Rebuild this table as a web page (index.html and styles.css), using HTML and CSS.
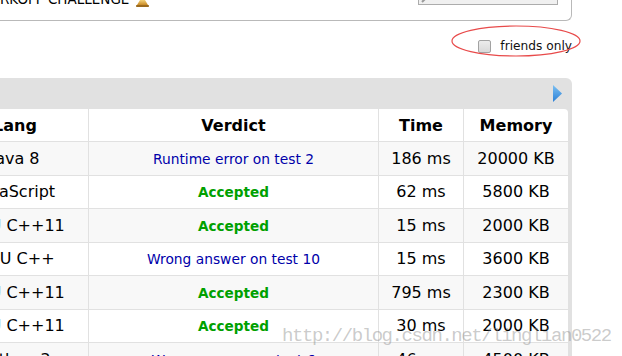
FILE: index.html
```html
<!DOCTYPE html>
<html>
<head>
<meta charset="utf-8">
<link rel="stylesheet" href="styles.css">
</head>
<body>
<div class="topbox">
  <div class="title">WORKOFF CHALLENGE<svg class="trophy" width="15" height="16" viewBox="0 0 15 16"><defs><linearGradient id="tg" x1="0" y1="0" x2="0" y2="1"><stop offset="0" stop-color="#f3d27a"/><stop offset="1" stop-color="#c98a26"/></linearGradient></defs><path d="M3 0h9v4c0 3-2 5-4.5 5S3 7 3 4z" fill="#e6ae3c"/><polygon points="5,9 10,9 13,14 2,14" fill="url(#tg)"/><rect x="1" y="14" width="13" height="2" rx="0.8" fill="#9c6a1c"/></svg></div>
  <div class="search"><svg width="8" height="8" viewBox="0 0 8 8"><path d="M1 7L6 2" stroke="#9a9a9a" stroke-width="2"/></svg></div>
</div>
<div class="filter">
  <label class="friends"><input type="checkbox" class="cb"><span>friends only</span></label>
  <svg class="mark" width="130" height="32" viewBox="0 0 130 32"><ellipse cx="65" cy="16" rx="64" ry="15" fill="none" stroke="#e84a4a" stroke-width="1.2"/></svg>
</div>
<div class="frame">
  <div class="frame-head"><svg width="9" height="17" viewBox="0 0 9 17"><defs><linearGradient id="ag" x1="0" y1="0" x2="0" y2="1"><stop offset="0" stop-color="#7cc0f2"/><stop offset="1" stop-color="#2a7fd6"/></linearGradient></defs><polygon points="0,0 9,8.5 0,17" fill="url(#ag)"/></svg></div>
  <table class="status">
    <colgroup><col class="c-lang"><col class="c-verdict"><col class="c-time"><col class="c-mem"></colgroup>
    <thead>
      <tr><th>Lang</th><th>Verdict</th><th>Time</th><th>Memory</th></tr>
    </thead>
    <tbody>
      <tr><td>Java 8</td><td><span class="rej">Runtime error on test 2</span></td><td>186 ms</td><td>20000 KB</td></tr>
      <tr><td>JavaScript</td><td><span class="ok">Accepted</span></td><td>62 ms</td><td>5800 KB</td></tr>
      <tr><td>GNU C++11</td><td><span class="ok">Accepted</span></td><td>15 ms</td><td>2000 KB</td></tr>
      <tr><td>GNU C++</td><td><span class="rej">Wrong answer on test 10</span></td><td>15 ms</td><td>3600 KB</td></tr>
      <tr><td>GNU C++11</td><td><span class="ok">Accepted</span></td><td>795 ms</td><td>2300 KB</td></tr>
      <tr><td>GNU C++11</td><td><span class="ok">Accepted</span></td><td>30 ms</td><td>2000 KB</td></tr>
      <tr><td>Python 3</td><td><span class="rej">Wrong answer on test 6</span></td><td>46 ms</td><td>4500 KB</td></tr>
    </tbody>
  </table>
</div>
<div class="wm">http://blog.csdn.net/linglian0522</div>
</body>
</html>
```
FILE: styles.css
```css
body {
  margin: 0;
  width: 622px;
  height: 356px;
  overflow: hidden;
  position: relative;
  background: #fff;
  color: #000;
  font-family: "DejaVu Sans", Verdana, sans-serif;
}

.topbox {
  box-sizing: border-box;
  width: 602px;
  height: 42px;
  margin: -21px 0 0 -30px;
  border-right: 1px solid #b9b9b9;
  border-bottom: 1px solid #b9b9b9;
  border-radius: 0 0 6px 0;
  display: flex;
  justify-content: space-between;
  align-items: flex-start;
  padding: 0 13px 0 6px;
}

.title {
  margin-top: 12px;
  font-size: 13.5px;
  line-height: 16px;
  white-space: nowrap;
}

.trophy {
  margin-left: 6px;
  vertical-align: -3px;
}

.search {
  margin-top: 2px;
  width: 140px;
  height: 24px;
  box-sizing: border-box;
  border: 1px solid #acacac;
  background: #f0f0f0;
  display: flex;
  align-items: flex-end;
  padding: 0 0 1px 2px;
}

.filter {
  position: relative;
  display: flex;
  justify-content: flex-end;
  padding-right: 50px;
  margin-top: 19px;
  height: 13px;
}

.friends {
  display: flex;
  align-items: center;
  gap: 9px;
  font-size: 12.2px;
  line-height: 13px;
  color: #111;
}

.cb {
  appearance: none;
  -webkit-appearance: none;
  margin: 0;
  width: 13px;
  height: 13px;
  box-sizing: border-box;
  border: 1px solid #a2a2a2;
  border-radius: 2px;
  background: linear-gradient(#ececec, #d9d9d9);
}

.mark {
  position: absolute;
  right: 41px;
  top: -15px;
}

.frame {
  margin: 25px 0 0 -58px;
  width: 630px;
  box-sizing: border-box;
  background: #e1e1e1;
  border-radius: 0 6px 0 0;
  padding: 0 4px 0 0;
}

.frame-head {
  height: 31px;
  box-sizing: border-box;
  display: flex;
  justify-content: flex-end;
  padding: 7px 6px 0 0;
}

.status {
  border-collapse: separate;
  border-spacing: 0;
  table-layout: fixed;
  width: 626px;
  background: #fff;
  border-top-right-radius: 4px;
}

.c-lang { width: 147px; }
.c-verdict { width: 290px; }
.c-time { width: 85px; }
.c-mem { width: 104px; }

.status th,
.status td {
  padding: 0;
  text-align: center;
  vertical-align: middle;
  border-right: 1px solid #e1e1e1;
  border-bottom: 1px solid #e1e1e1;
  font-size: 16px;
  white-space: nowrap;
  box-sizing: border-box;
}

.status th:last-child,
.status td:last-child {
  border-right: none;
}

.status th {
  height: 33px;
  font-weight: bold;
}

.status td {
  height: 33.5px;
}

.status tbody tr:nth-child(odd) td {
  background: #f8f8f8;
}

.ok {
  color: #00a000;
  font-weight: bold;
  font-size: 13.6px;
}

.rej {
  color: #0000aa;
  font-size: 13.8px;
}

.wm {
  position: absolute;
  left: 282px;
  top: 327px;
  font-family: "Liberation Mono", monospace;
  font-size: 19px;
  line-height: 19px;
  letter-spacing: -1.44px;
  color: rgba(130, 130, 130, 0.42);
  white-space: nowrap;
}
```
